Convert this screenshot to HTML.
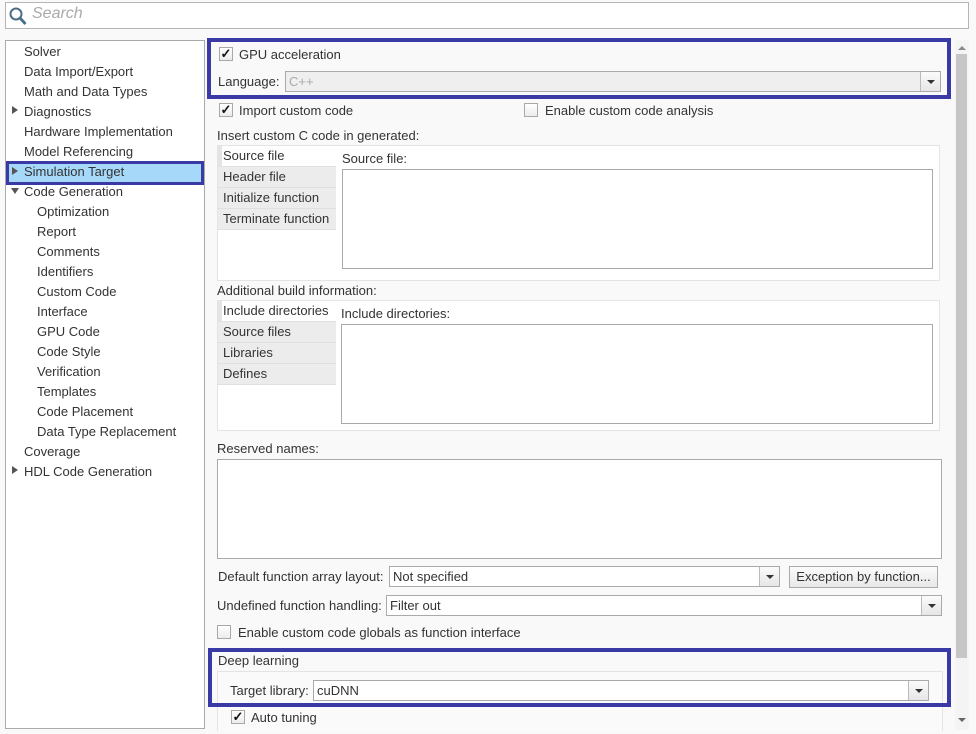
<!DOCTYPE html>
<html><head><meta charset="utf-8"><style>
*{box-sizing:border-box;margin:0;padding:0}
body{width:976px;height:734px;background:#f9f9f9;font-family:"Liberation Sans",sans-serif;font-size:13px;color:#333;position:relative;overflow:hidden}
.a{position:absolute;white-space:nowrap}
.cb{position:absolute;width:14px;height:14px;border:1px solid #a8a8a8;background:linear-gradient(#fff,#ececec);font-size:13px;font-weight:bold;line-height:12px;text-align:center;color:#111}
.ta{position:absolute;background:#fff;border:1px solid #aaa}
.dd{position:absolute;background:#fff;border:1px solid #aaa;height:21px;line-height:19px;padding-left:3px}
.dd .btn{position:absolute;right:0;top:0;width:20px;height:19px;border-left:1px solid #bbb;background:linear-gradient(#fbfbfb,#e6e6e6)}
.dd .btn:after{content:"";position:absolute;left:6px;top:8px;border-left:4px solid transparent;border-right:4px solid transparent;border-top:4px solid #333}
.hl{position:absolute;border:4px solid #3a3aa6}
.tab{position:absolute;left:0;width:118px;height:21px;line-height:20px;padding-left:5px;background:#ececec;border-bottom:1px solid #e0e0e0}
.panel{position:absolute;border:1px solid #e4e4e4;background:#fff}
.tree div{position:absolute;white-space:nowrap}
</style></head><body>
<div class="a" style="left:5px;top:2px;width:964px;height:27px;background:#fff;border:1px solid #b5b5b5"></div>
<svg class="a" style="left:9px;top:7px" width="18" height="19"><circle cx="7" cy="7" r="5.5" fill="none" stroke="#4a6f8a" stroke-width="2"/><path d="M11 11 L16.5 17" stroke="#4a6f8a" stroke-width="2.8"/></svg>
<div class="a" style="left:32px;top:5px;font-size:16px;font-style:italic;color:#aaa">Search</div>

<div class="a tree" style="left:5px;top:40px;width:200px;height:689px;background:#fff;border:1px solid #aaa">
<div style="left:2px;top:121px;width:194px;height:21px;background:#a6d8f9"></div>
<div class="hl" style="left:0;top:120px;width:198px;height:24px;border-width:3px"></div>
<div style="left:18px;top:3px">Solver</div>
<div style="left:18px;top:23px">Data Import/Export</div>
<div style="left:18px;top:43px">Math and Data Types</div>
<div style="left:6px;top:65px;border-left:6px solid #555;border-top:4px solid transparent;border-bottom:4px solid transparent"></div>
<div style="left:18px;top:63px">Diagnostics</div>
<div style="left:18px;top:83px">Hardware Implementation</div>
<div style="left:18px;top:103px">Model Referencing</div>
<div style="left:6px;top:126px;border-left:6px solid #555;border-top:4px solid transparent;border-bottom:4px solid transparent"></div>
<div style="left:18px;top:123px">Simulation Target</div>
<div style="left:5px;top:147px;border-top:6px solid #555;border-left:4px solid transparent;border-right:4px solid transparent"></div>
<div style="left:18px;top:143px">Code Generation</div>
<div style="left:31px;top:163px">Optimization</div>
<div style="left:31px;top:183px">Report</div>
<div style="left:31px;top:203px">Comments</div>
<div style="left:31px;top:223px">Identifiers</div>
<div style="left:31px;top:243px">Custom Code</div>
<div style="left:31px;top:263px">Interface</div>
<div style="left:31px;top:283px">GPU Code</div>
<div style="left:31px;top:303px">Code Style</div>
<div style="left:31px;top:323px">Verification</div>
<div style="left:31px;top:343px">Templates</div>
<div style="left:31px;top:363px">Code Placement</div>
<div style="left:31px;top:383px">Data Type Replacement</div>
<div style="left:18px;top:403px">Coverage</div>
<div style="left:6px;top:425px;border-left:6px solid #555;border-top:4px solid transparent;border-bottom:4px solid transparent"></div>
<div style="left:18px;top:423px">HDL Code Generation</div>
</div>

<div class="hl" style="left:207px;top:38px;width:744px;height:61px"></div>
<div class="cb" style="left:219px;top:47px">✓</div>
<div class="a" style="left:239px;top:47px">GPU acceleration</div>
<div class="a" style="left:218px;top:74px">Language:</div>
<div class="dd" style="left:285px;top:71px;width:656px;background:#efefef;color:#aaa">C++<div class="btn"></div></div>

<div class="cb" style="left:219px;top:103px">✓</div>
<div class="a" style="left:239px;top:103px">Import custom code</div>
<div class="cb" style="left:524px;top:103px"></div>
<div class="a" style="left:545px;top:103px">Enable custom code analysis</div>

<div class="a" style="left:217px;top:128px">Insert custom C code in generated:</div>
<div class="panel" style="left:217px;top:145px;width:723px;height:136px">
<div class="tab" style="top:0;background:#fff;border-left:4px solid #e4e4e4;padding-left:1px">Source file</div>
<div class="tab" style="top:21px">Header file</div>
<div class="tab" style="top:42px">Initialize function</div>
<div class="tab" style="top:63px">Terminate function</div>
<div class="a" style="left:124px;top:5px">Source file:</div>
</div>
<div class="ta" style="left:342px;top:169px;width:591px;height:100px"></div>

<div class="a" style="left:217px;top:283px">Additional build information:</div>
<div class="panel" style="left:217px;top:300px;width:723px;height:131px">
<div class="tab" style="top:0;background:#fff;border-left:4px solid #e4e4e4;padding-left:1px">Include directories</div>
<div class="tab" style="top:21px">Source files</div>
<div class="tab" style="top:42px">Libraries</div>
<div class="tab" style="top:63px">Defines</div>
<div class="a" style="left:123px;top:5px">Include directories:</div>
</div>
<div class="ta" style="left:341px;top:324px;width:592px;height:100px"></div>

<div class="a" style="left:217px;top:441px">Reserved names:</div>
<div class="ta" style="left:217px;top:459px;width:725px;height:100px"></div>

<div class="a" style="left:218px;top:569px">Default function array layout:</div>
<div class="dd" style="left:389px;top:566px;width:391px">Not specified<div class="btn"></div></div>
<div class="a" style="left:789px;top:566px;width:149px;height:22px;border:1px solid #aaa;background:linear-gradient(#fbfbfb,#e8e8e8);text-align:center;line-height:20px">Exception by function...</div>

<div class="a" style="left:217px;top:598px">Undefined function handling:</div>
<div class="dd" style="left:386px;top:595px;width:556px">Filter out<div class="btn"></div></div>

<div class="cb" style="left:217px;top:625px"></div>
<div class="a" style="left:238px;top:625px">Enable custom code globals as function interface</div>

<div class="a" style="left:217px;top:671px;width:726px;height:60px;border:1px solid #e4e4e4;border-bottom:none;background:#fafafa"></div>
<div class="hl" style="left:208px;top:648px;width:743px;height:59px"></div>
<div class="a" style="left:218px;top:653px">Deep learning</div>
<div class="a" style="left:230px;top:683px">Target library:</div>
<div class="dd" style="left:313px;top:680px;width:616px">cuDNN<div class="btn"></div></div>
<div class="cb" style="left:231px;top:710px">✓</div>
<div class="a" style="left:251px;top:710px">Auto tuning</div>

<div class="a" style="left:955px;top:40px;width:14px;height:690px;background:#f4f4f4"></div>
<div class="a" style="left:958px;top:46px;border-bottom:4px solid #888;border-left:4px solid transparent;border-right:4px solid transparent"></div>
<div class="a" style="left:956px;top:54px;width:11px;height:604px;background:#c6c6c6"></div>
<div class="a" style="left:958px;top:718px;border-top:4px solid #666;border-left:4px solid transparent;border-right:4px solid transparent"></div>
</body></html>
